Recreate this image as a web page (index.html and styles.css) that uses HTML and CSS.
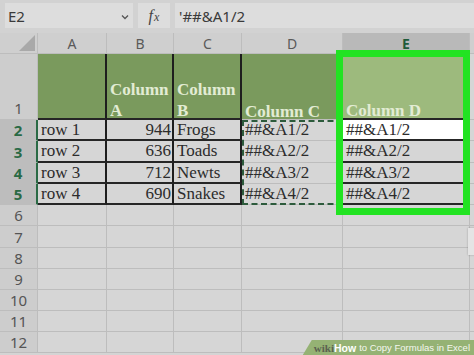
FILE: index.html
```html
<!DOCTYPE html>
<html>
<head>
<meta charset="utf-8">
<link rel="stylesheet" href="styles.css">
</head>
<body>
<div class="app">
  <div class="fbar">
    <div class="namebox"><span>E2</span><svg class="chev" width="8" height="6" viewBox="0 0 8 6"><path d="M1 1.5 L4 4.5 L7 1.5" fill="none" stroke="#555" stroke-width="1.3"/></svg></div>
    <div class="fx"><span class="fxf">f</span><span class="fxx">x</span></div>
    <div class="formula">'##&amp;A1/2</div>
  </div>
  <div class="sheet">
    <!-- header row -->
    <div class="cell corner"><div class="tri"></div></div>
    <div class="cell ch">A</div>
    <div class="cell ch">B</div>
    <div class="cell ch">C</div>
    <div class="cell ch">D</div>
    <div class="cell ch ch-sel">E</div>
    <div class="cell ch edge"></div>
    <!-- row 1 -->
    <div class="cell rh rh-1">1</div>
    <div class="cell head dk-r dk-b"></div>
    <div class="cell head dk-r dk-b"><div class="ht">Column A</div></div>
    <div class="cell head dk-r dk-b"><div class="ht">Column B</div></div>
    <div class="cell head"><div class="ht">Column C</div></div>
    <div class="cell head head-e dk-b"><div class="ht">Column D</div></div>
    <div class="cell edge"></div>
    <!-- row 2 -->
    <div class="cell rh rh-sel">2</div>
    <div class="cell txt dk-r dk-b">row 1</div>
    <div class="cell txt num dk-r dk-b">944</div>
    <div class="cell txt dk-r dk-b">Frogs</div>
    <div class="cell txt">##&amp;A1/2</div>
    <div class="cell txt active dk-b">##&amp;A1/2</div>
    <div class="cell edge"></div>
    <!-- row 3 -->
    <div class="cell rh rh-sel">3</div>
    <div class="cell txt dk-r dk-b">row 2</div>
    <div class="cell txt num dk-r dk-b">636</div>
    <div class="cell txt dk-r dk-b">Toads</div>
    <div class="cell txt">##&amp;A2/2</div>
    <div class="cell txt dk-b">##&amp;A2/2</div>
    <div class="cell edge"></div>
    <!-- row 4 -->
    <div class="cell rh rh-sel">4</div>
    <div class="cell txt dk-r dk-b">row 3</div>
    <div class="cell txt num dk-r dk-b">712</div>
    <div class="cell txt dk-r dk-b">Newts</div>
    <div class="cell txt">##&amp;A3/2</div>
    <div class="cell txt dk-b">##&amp;A3/2</div>
    <div class="cell edge"></div>
    <!-- row 5 -->
    <div class="cell rh rh-sel">5</div>
    <div class="cell txt dk-r dk-b">row 4</div>
    <div class="cell txt num dk-r dk-b">690</div>
    <div class="cell txt dk-r dk-b">Snakes</div>
    <div class="cell txt">##&amp;A4/2</div>
    <div class="cell txt dk-b">##&amp;A4/2</div>
    <div class="cell edge"></div>
    <!-- rows 6-12 -->
    <div class="cell rh">6</div><div class="cell"></div><div class="cell"></div><div class="cell"></div><div class="cell"></div><div class="cell"></div><div class="cell edge"></div>
    <div class="cell rh">7</div><div class="cell"></div><div class="cell"></div><div class="cell"></div><div class="cell"></div><div class="cell"></div><div class="cell edge"></div>
    <div class="cell rh">8</div><div class="cell"></div><div class="cell"></div><div class="cell"></div><div class="cell"></div><div class="cell"></div><div class="cell edge"></div>
    <div class="cell rh">9</div><div class="cell"></div><div class="cell"></div><div class="cell"></div><div class="cell"></div><div class="cell"></div><div class="cell edge"></div>
    <div class="cell rh">10</div><div class="cell"></div><div class="cell"></div><div class="cell"></div><div class="cell"></div><div class="cell"></div><div class="cell edge"></div>
    <div class="cell rh">11</div><div class="cell"></div><div class="cell"></div><div class="cell"></div><div class="cell"></div><div class="cell"></div><div class="cell edge"></div>
    <div class="cell rh">12</div><div class="cell"></div><div class="cell"></div><div class="cell"></div><div class="cell"></div><div class="cell"></div><div class="cell edge"></div>

    <div class="ants"></div>
    <div class="selbox"></div>
    <div class="popup"></div>
  </div>
  <div class="wm"><span class="wm-wiki">wiki</span><span class="wm-how">How</span><span class="wm-rest">to Copy Formulas in Excel</span></div>
</div>
</body>
</html>
```

FILE: styles.css
```css
html, body {
  margin: 0;
  padding: 0;
}
body {
  width: 474px;
  height: 355px;
  overflow: hidden;
  background: #d4d4d4;
  font-family: "Liberation Serif", serif;
}
.app {
  position: relative;
  width: 474px;
  height: 355px;
  overflow: hidden;
}

/* formula bar */
.fbar {
  height: 33px;
  box-sizing: border-box;
  display: flex;
  align-items: flex-start;
  gap: 5px;
  padding: 3px 0 0 5px;
  background: #d2d2d2;
}
.namebox, .fx, .formula {
  height: 25px;
  box-sizing: border-box;
  background: #dddddd;
  display: flex;
  align-items: center;
  font-family: "Noto Sans", sans-serif;
  font-size: 15px;
  color: #3a3a3a;
}
.namebox {
  width: 128px;
  justify-content: space-between;
  padding: 0 4px 0 3px;
}
.chev {
  margin-top: 2px;
}
.fx {
  width: 32px;
  justify-content: center;
  font-family: "Liberation Serif", serif;
  font-style: italic;
  font-size: 16px;
  color: #444;
}
.fxx {
  font-size: 12px;
  margin-left: 1px;
  margin-top: 4px;
}
.formula {
  flex: 1;
  padding-left: 4px;
}

/* sheet */
.sheet {
  position: relative;
  display: grid;
  grid-template-columns: 38px 69px 67px 68px 101px 127px 4px;
  grid-template-rows: 21px 66px 21px 22px 21px 21px 21px 22px 21px 21px 21px 21px 21px;
  background: #d6d6d6;
}
.cell {
  box-sizing: border-box;
  border-right: 1px solid #bdbdbd;
  border-bottom: 1px solid #bdbdbd;
  min-width: 0;
  overflow: visible;
  white-space: nowrap;
}
.corner {
  background: #cfcfcf;
  position: relative;
}
.tri {
  position: absolute;
  right: 2px;
  bottom: 2px;
  width: 16px;
  height: 16px;
  background: #a9a9a9;
  clip-path: polygon(100% 0, 100% 100%, 0 100%);
}
.ch {
  background: #cfcfcf;
  display: flex;
  align-items: center;
  justify-content: center;
  font-family: "Noto Sans", sans-serif;
  font-size: 14px;
  color: #5a5a5a;
}
.ch-sel {
  background: #b9b9b9;
  color: #1f5b3a;
  font-weight: bold;
}
.edge {
  border-right: none;
}
.rh {
  background: #cdcdcd;
  display: flex;
  align-items: center;
  justify-content: center;
  font-family: "Noto Sans", sans-serif;
  font-size: 15px;
  color: #555;
}
.rh-1 {
  align-items: flex-end;
  padding-bottom: 1px;
}
.rh-sel {
  background: #bdbdbd;
  color: #2a6a45;
  font-weight: bold;
  border-right: 2px solid #2a6a45;
}

/* header row 1 */
.head {
  background: #7a9a5d;
  display: flex;
  align-items: flex-end;
  padding-left: 3px;
}
.head-e {
  background: #9dba7d;
}
.ht {
  font-weight: bold;
  font-size: 17px;
  line-height: 21px;
  color: #e2ecd4;
  white-space: normal;
  margin-bottom: -3px;
}

/* data */
.txt {
  font-size: 17px;
  line-height: 20px;
  color: #2c2c2c;
  padding-left: 3px;
}
.num {
  text-align: right;
  padding-left: 0;
  padding-right: 1px;
}
.active {
  background: #ffffff;
}
.dk-r {
  border-right: 2px solid #1e1e1e;
}
.dk-b {
  border-bottom: 2px solid #262626;
}

/* overlays */
.ants {
  position: absolute;
  left: 242px;
  top: 87px;
  width: 101px;
  height: 85px;
  box-sizing: border-box;
  border: 2px dashed #2d5b3c;
}
.selbox {
  position: absolute;
  left: 336px;
  top: 17px;
  width: 134px;
  height: 165px;
  box-sizing: border-box;
  border: 7px solid #22e322;
}
.popup {
  position: absolute;
  left: 468px;
  top: 195px;
  width: 10px;
  height: 27px;
  background: #e4e4e4;
  box-shadow: 0 0 2px rgba(0,0,0,0.25);
}

/* watermark */
.wm {
  position: absolute;
  right: 0;
  bottom: 0;
  height: 15px;
  box-sizing: border-box;
  padding: 0 4px 0 11px;
  background: #95b274;
  clip-path: polygon(9px 0, 100% 0, 100% 100%, 0 100%);
  display: flex;
  align-items: center;
  font-family: "Liberation Sans", sans-serif;
  font-size: 9.5px;
  color: #f4f7ef;
  white-space: nowrap;
}
.wm-wiki {
  font-family: "Liberation Serif", serif;
  font-weight: bold;
  font-size: 11px;
  color: #5b6150;
}
.wm-how {
  font-size: 10.5px;
  font-weight: bold;
  color: #ffffff;
}
.wm-rest {
  margin-left: 3px;
}
```
